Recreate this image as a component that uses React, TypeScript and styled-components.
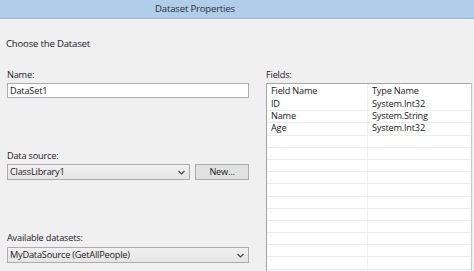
import React from 'react';
import styled, { createGlobalStyle } from 'styled-components';

const GlobalStyle = createGlobalStyle`
  html, body {
    margin: 0;
    padding: 0;
    background: #f0f0f0;
  }
  body {
    font-family: "Open Sans", "Noto Sans", "Liberation Sans", sans-serif;
    font-size: 9.2px;
    letter-spacing: -0.2px;
    color: #1a1a1a;
  }
`;

const Window = styled.div`
  width: 474px;
  height: 271px;
  overflow: hidden;
  background: #f0f0f0;
  display: flex;
  flex-direction: column;
`;

const TitleBar = styled.div`
  height: 18px;
  flex: none;
  background: #b1cde9;
  border-bottom: 1px solid #9ab6d5;
  display: flex;
  align-items: center;
  justify-content: center;
  padding-right: 84px;
  font-size: 9.6px;
  color: #2a3340;
  line-height: 18px;
`;

const Heading = styled.div`
  margin-top: 18px;
  padding-left: 6px;
  line-height: 14px;
  font-size: 9.6px;
`;

const Columns = styled.div`
  display: flex;
  margin-top: 18px;
  padding-left: 7px;
`;

const LeftCol = styled.div`
  width: 242px;
  display: flex;
  flex-direction: column;
`;

const RightCol = styled.div`
  width: 206px;
  margin-left: 17px;
  display: flex;
  flex-direction: column;
`;

const Label = styled.div<{ $gap?: number }>`
  line-height: 12px;
  margin-top: ${(p) => p.$gap ?? 0}px;
  margin-bottom: 2px;
  color: #222;
`;

const TextBox = styled.div`
  box-sizing: border-box;
  height: 15px;
  background: #fff;
  border: 1px solid #abadb3;
  padding-left: 2px;
  line-height: 13px;
`;

const Row = styled.div`
  display: flex;
  gap: 5px;
`;

const Combo = styled.div<{ $width: number }>`
  box-sizing: border-box;
  width: ${(p) => p.$width}px;
  height: 16px;
  border: 1px solid #acacac;
  background: linear-gradient(#f0f0f0, #e5e5e5);
  display: flex;
  align-items: center;
  justify-content: space-between;
  padding: 0 4px 0 2px;
  line-height: 14px;
`;

const Button = styled.div`
  box-sizing: border-box;
  width: 54px;
  height: 16px;
  border: 1px solid #adadad;
  background: #e1e1e1;
  display: flex;
  align-items: center;
  justify-content: center;
  line-height: 14px;
`;

const Grid = styled.div`
  box-sizing: border-box;
  height: 200px;
  background: #fff;
  border: 1px solid #a5a5a5;
  border-right-color: #c8c8c8;
`;

const GridRow = styled.div<{ $header?: boolean }>`
  display: grid;
  grid-template-columns: 101px 1fr;
  height: ${(p) => (p.$header ? 15 : 12.2)}px;
  border-bottom: 1px solid ${(p) => (p.$header ? 'transparent' : '#ececec')};
  box-sizing: border-box;
  line-height: ${(p) => (p.$header ? 13 : 10.5)}px;
`;

const Cell = styled.div`
  padding-left: 4px;
  border-right: 1px solid #f2f2f2;
  white-space: nowrap;
  &:last-child {
    border-right: none;
  }
`;

const Chevron = () => (
  <svg width="7" height="5" viewBox="0 0 7 5">
    <polyline points="0.5,1 3.5,4 6.5,1" fill="none" stroke="#444" strokeWidth="1.2" />
  </svg>
);

const fields: Array<[string, string]> = [
  ['ID', 'System.Int32'],
  ['Name', 'System.String'],
  ['Age', 'System.Int32'],
];

export default function App() {
  const empty = Array.from({ length: 12 });
  return (
    <>
      <GlobalStyle />
      <Window>
        <TitleBar>Dataset Properties</TitleBar>
        <Heading>Choose the Dataset</Heading>
        <Columns>
          <LeftCol>
            <Label>Name:</Label>
            <TextBox>DataSet1</TextBox>
            <Label $gap={52}>Data source:</Label>
            <Row>
              <Combo $width={183}>
                <span>ClassLibrary1</span>
                <Chevron />
              </Combo>
              <Button>New...</Button>
            </Row>
            <Label $gap={52}>Available datasets:</Label>
            <Combo $width={242} style={{ marginTop: 1 }}>
              <span>MyDataSource (GetAllPeople)</span>
              <Chevron />
            </Combo>
          </LeftCol>
          <RightCol>
            <Label>Fields:</Label>
            <Grid>
              <GridRow $header>
                <Cell>Field Name</Cell>
                <Cell>Type Name</Cell>
              </GridRow>
              {fields.map(([name, type], idx) => (
                <GridRow key={`field-${idx}`}>
                  <Cell>{name}</Cell>
                  <Cell>{type}</Cell>
                </GridRow>
              ))}
              {empty.map((_, idx) => (
                <GridRow key={`empty-${idx}`}>
                  <Cell />
                  <Cell />
                </GridRow>
              ))}
            </Grid>
          </RightCol>
        </Columns>
      </Window>
    </>
  );
}
